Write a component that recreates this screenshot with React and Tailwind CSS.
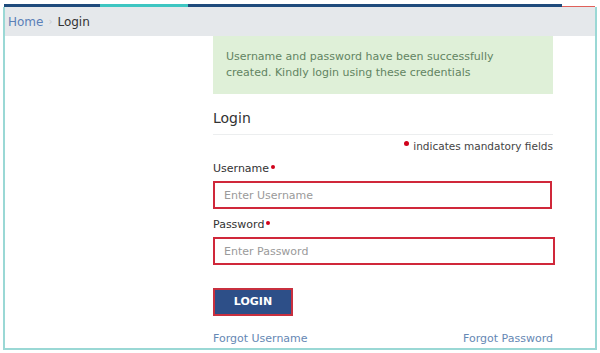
import React from "react";

const font = { fontFamily: '"DejaVu Sans", Verdana, sans-serif' };

function Dot({ className = "" }) {
	return (
		<span
			className={`inline-block h-[4px] w-[4px] rounded-full bg-[#d0021b] ${className}`}
		/>
	);
}

function Field({ label, placeholder, type = "text", wide }) {
	return (
		<div className="flex flex-col">
			<label className="flex items-start text-[11px] leading-[14px] text-[#333]">
				{label}
				<Dot className="ml-[2px] mt-[3px]" />
			</label>
			<input
				type={type}
				placeholder={placeholder}
				className={`mt-[5px] h-[28px] border-2 border-[#d0283a] bg-white px-[9px] text-[11px] text-[#333] outline-none placeholder:text-[#9a9a9a] ${
					wide ? "w-[342px]" : "w-[339px]"
				}`}
			/>
		</div>
	);
}

export default function App() {
	return (
		<div className="h-[353px] w-[600px] overflow-hidden bg-white px-[3px] pt-[4px]" style={font}>
			{/* top colour strip */}
			<div className="ml-[1px] mr-[2px] flex h-[3px] items-end">
				<div className="h-[3px] w-[96px] bg-[#1f4b7c]" />
				<div className="h-[3px] w-[88px] bg-[#3ec6c2]" />
				<div className="h-[3px] w-[374px] bg-[#1f4b7c]" />
				<div className="h-[1px] flex-1 bg-[#e0605a]" />
			</div>

			<div className="flex h-[343px] flex-col border-x-2 border-b-2 border-[#9ad8d5]">
				{/* breadcrumb */}
				<div className="flex h-[29px] shrink-0 items-center bg-[#e5e8eb] pl-[3px] text-[12px]">
					<a className="text-[#5b80b8]">Home</a>
					<span className="mx-[5px] text-[10px] text-[#c7cbd0]">›</span>
					<span className="text-[#333]">Login</span>
				</div>

				<div className="ml-[208px] flex w-[342px] flex-col">
					<div className="w-[340px] bg-[#dff0d8] px-[13px] py-[13px] text-[11px] leading-[16px] text-[#628462]">
						Username and password have been successfully
						<br />
						created. Kindly login using these credentials
					</div>

					<div className="mt-[15px] w-[340px] border-b border-[#eceeef] pb-[7px] text-[14px] leading-[18px] text-[#333]">
						Login
					</div>

					<div className="mt-[4px] flex w-[340px] items-start justify-end text-[10.5px] leading-[14px] text-[#444]">
						<Dot className="mr-[4px] mt-[2px] h-[5px] w-[5px]" />
						indicates mandatory fields
					</div>

					<div className="mt-[9px] flex flex-col gap-[9px]">
						<Field label="Username" placeholder="Enter Username" />
						<Field label="Password" placeholder="Enter Password" type="password" wide />
					</div>

					<button className="mt-[23px] h-[28px] w-[80px] shrink-0 border-2 border-[#c8303f] bg-[#2d4f88] text-[11px] font-bold text-white">
						LOGIN
					</button>

					<div className="mt-[15px] flex w-[340px] justify-between text-[11px] text-[#6688b4]">
						<a>Forgot Username</a>
						<a>Forgot Password</a>
					</div>
				</div>
			</div>
		</div>
	);
}
